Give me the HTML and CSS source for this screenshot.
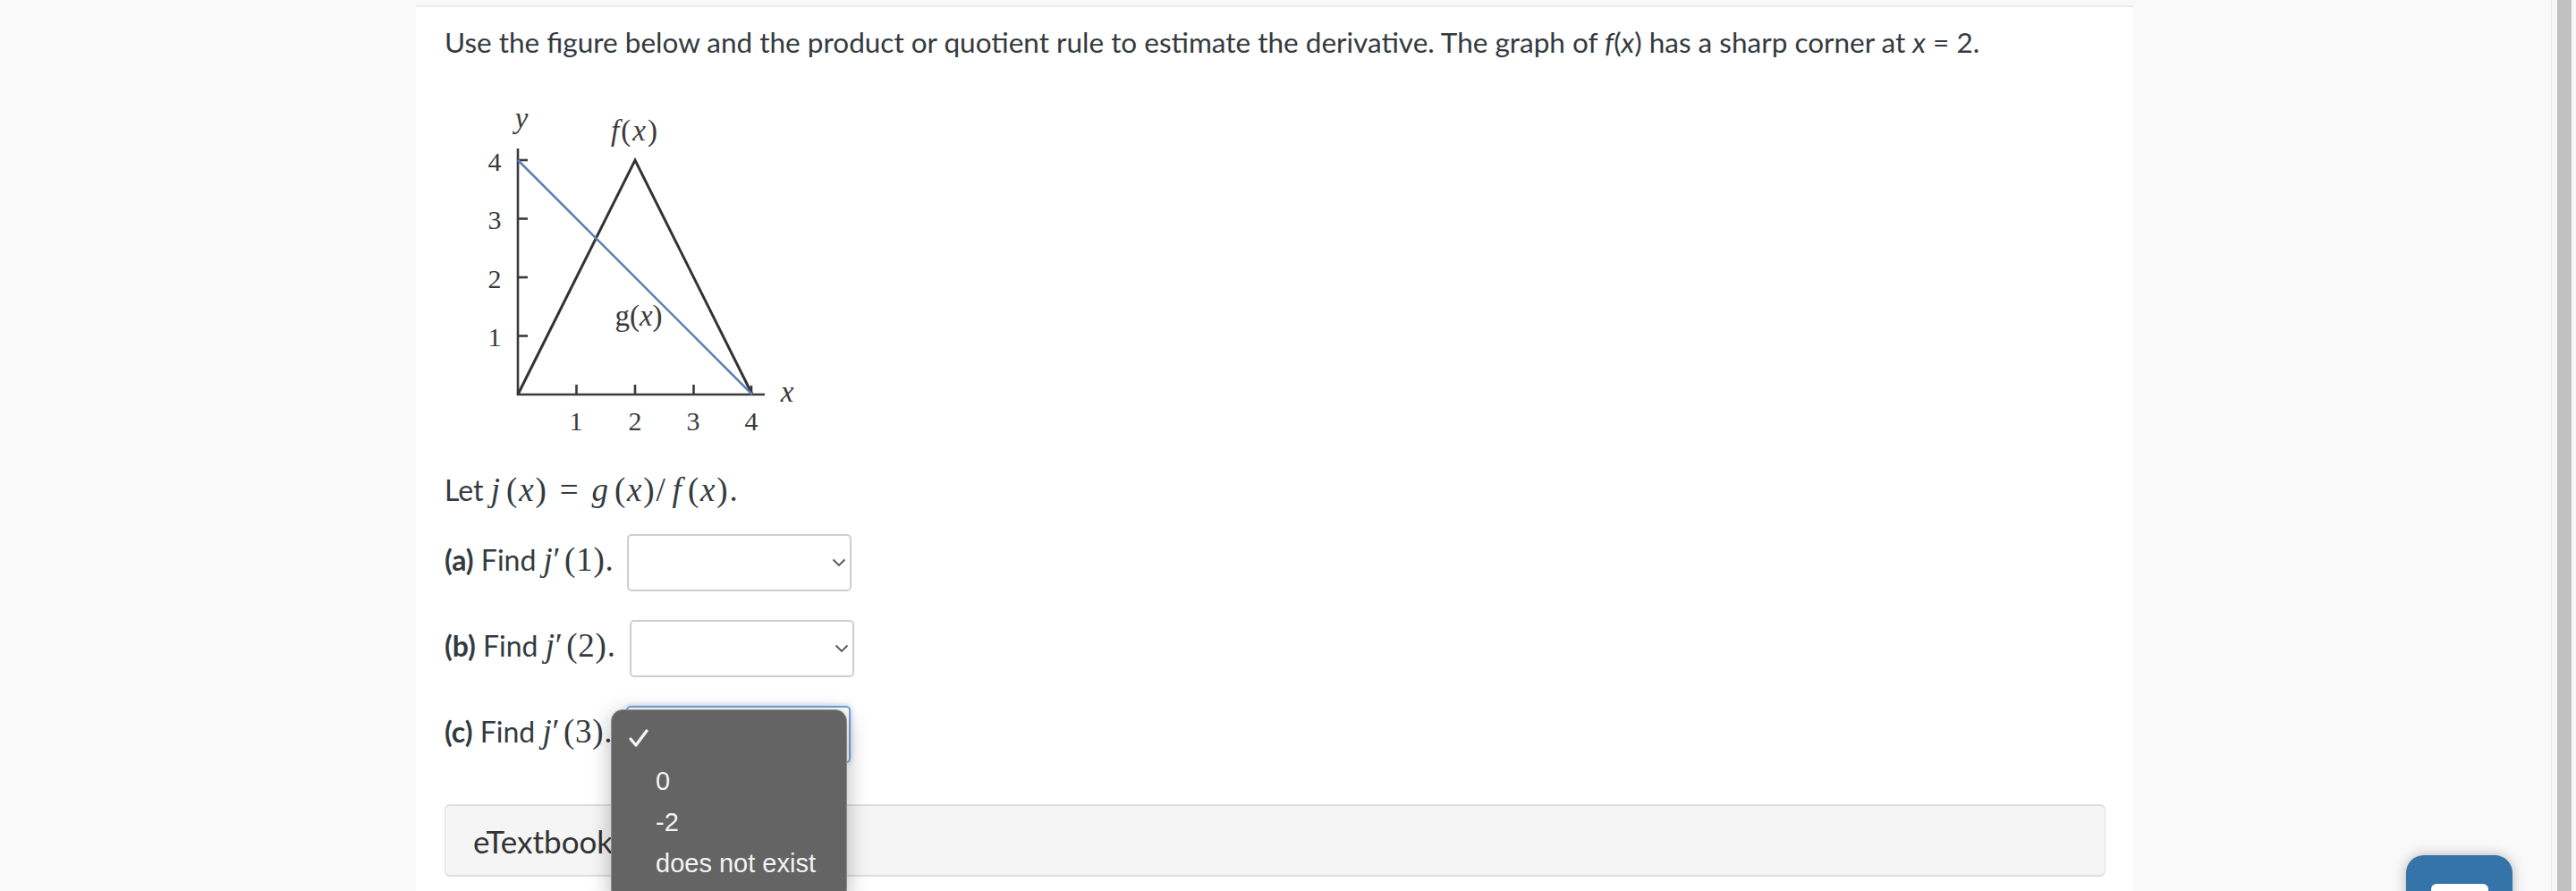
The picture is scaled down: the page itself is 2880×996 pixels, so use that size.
FILE: index.html
```html
<!DOCTYPE html>
<html>
<head>
<meta charset="utf-8">
<title>Question</title>
<link rel="stylesheet" href="styles.css">
</head>
<body>
<div class="main">
  <div class="card">
    <p class="prompt">Use the figure below and the product or quotient rule to estimate the derivative. The graph of <i>f</i>(<i>x</i>) has a sharp corner at <i>x</i> = 2.</p>

    <svg class="figure" width="420" height="390" viewBox="0 0 420 390" xmlns="http://www.w3.org/2000/svg">
      <g stroke="#3a3a3a" stroke-width="2.6" fill="none">
        <line x1="82" y1="66" x2="82" y2="342"/>
        <line x1="81" y1="341" x2="358" y2="341"/>
        <line x1="82" y1="275.5" x2="93" y2="275.5"/>
        <line x1="82" y1="210" x2="93" y2="210"/>
        <line x1="82" y1="144.5" x2="93" y2="144.5"/>
        <line x1="82" y1="79" x2="93" y2="79"/>
        <line x1="147.5" y1="341" x2="147.5" y2="330"/>
        <line x1="213" y1="341" x2="213" y2="330"/>
        <line x1="278.5" y1="341" x2="278.5" y2="330"/>
        <line x1="343" y1="341" x2="343" y2="331"/>
      </g>
      <polyline points="82,341 213,79 344,341" stroke="#333" stroke-width="3" fill="none" stroke-linejoin="miter"/>
      <line x1="82" y1="79" x2="344" y2="341" stroke="#5a84b3" stroke-width="2.6"/>
      <g class="svgnum" font-size="30" fill="#3a3a3a" text-anchor="middle">
        <text x="56" y="91">4</text>
        <text x="56" y="156">3</text>
        <text x="56" y="222">2</text>
        <text x="56" y="287">1</text>
        <text x="147" y="381">1</text>
        <text x="213" y="381">2</text>
        <text x="278" y="381">3</text>
        <text x="343" y="381">4</text>
      </g>
      <g class="svgnum" font-size="33" fill="#3a3a3a" text-anchor="middle">
        <text x="86" y="43" font-style="italic">y</text>
        <text x="213" y="57" letter-spacing="2"><tspan font-style="italic">f</tspan>(<tspan font-style="italic">x</tspan>)</text>
        <text x="217" y="264">g(<tspan font-style="italic">x</tspan>)</text>
        <text x="383" y="349" font-style="italic">x</text>
      </g>
    </svg>

    <p class="let">Let <span class="m"><i class="fn">j</i>(<i>x</i>)<span class="eq">=</span><i class="fn">g</i>(<i>x</i>)<span class="sl">/</span><i class="fn">f</i>(<i>x</i>).</span></p>

    <div class="row row-a">
      <span class="label"><b>(a)</b> Find <span class="m"><i>j</i><span class="pr">&#8242;</span>(1).</span></span>
      <div class="select"><svg class="chev" width="16" height="10" viewBox="0 0 16 10"><polyline points="1.5,1.5 8,8 14.5,1.5" fill="none" stroke="#555" stroke-width="1.8"/></svg></div>
    </div>
    <div class="row">
      <span class="label"><b>(b)</b> Find <span class="m"><i>j</i><span class="pr">&#8242;</span>(2).</span></span>
      <div class="select"><svg class="chev" width="16" height="10" viewBox="0 0 16 10"><polyline points="1.5,1.5 8,8 14.5,1.5" fill="none" stroke="#555" stroke-width="1.8"/></svg></div>
    </div>
    <div class="row">
      <span class="label"><b>(c)</b> Find <span class="m"><i>j</i><span class="pr">&#8242;</span>(3).</span></span>
      <div class="select focused"></div>
    </div>

    <div class="etext">eTextbook</div>
  </div>
</div>
<div class="scrollbar"><div class="thumb"></div></div>

<div class="menu">
  <div class="opt opt-check"><svg width="24" height="22" viewBox="0 0 24 22"><polyline points="3,12 9,19 21,3" fill="none" stroke="#f4f4f4" stroke-width="3.4" stroke-linecap="round" stroke-linejoin="round"/></svg></div>
  <div class="opt">0</div>
  <div class="opt">-2</div>
  <div class="opt">does not exist</div>
</div>

<div class="fab"><div class="fab-inner"></div></div>
</body>
</html>
```

FILE: styles.css
```css
html, body {
  margin: 0;
  padding: 0;
  height: 996px;
  overflow: hidden;
}
body {
  background: #f9f9f9;
  display: flex;
  font-family: Lato, "Liberation Sans", sans-serif;
  color: #333a40;
  position: relative;
}
.main {
  flex: 1;
  padding-top: 6px;
}
.card {
  margin-left: 465px;
  width: 1920px;
  box-sizing: border-box;
  height: 1100px;
  background: #fff;
  border-top: 2px solid #ebebeb;
  padding: 17px 31px 0 31px;
}
.prompt {
  margin: 0 0 0 1px;
  font-size: 31.5px;
  line-height: 45px;
}
.figure {
  display: block;
  margin-top: 30px;
  margin-left: 1px;
}
.svgnum {
  font-family: "Liberation Serif", serif;
}
.let {
  margin: 35px 0 0 1px;
  font-size: 32px;
  line-height: 45px;
  height: 45px;
}
.m {
  font-family: "Liberation Serif", serif;
  font-size: 37px;
  letter-spacing: 0.05em;
}
.m i {
  font-style: italic;
}
.fn {
  margin-right: 0.14em;
}
.eq {
  margin: 0 13px;
}
.sl {
  margin-right: 0.16em;
}
.label .m {
  letter-spacing: 0.02em;
}
.pr {
  margin-right: 0.1em;
}
.row {
  display: flex;
  align-items: flex-start;
  gap: 15px;
  margin-top: 32px;
  margin-left: 1px;
  height: 64px;
}
.row-a {
  margin-top: 27px;
}
.label {
  font-size: 32px;
  line-height: 58px;
  white-space: nowrap;
}
.label b {
  font-weight: 700;
}
.select {
  width: 251px;
  height: 64px;
  box-sizing: border-box;
  border: 2px solid #cfcfcf;
  border-radius: 5px;
  background: #fff;
  display: flex;
  align-items: center;
  justify-content: flex-end;
  padding-right: 4px;
}
.select.focused {
  border-color: #74a3d8;
  box-shadow: 0 0 6px rgba(90, 150, 220, 0.45);
}
.etext {
  margin-top: 46px;
  margin-left: 1px;
  height: 81px;
  box-sizing: border-box;
  border: 2px solid #dedede;
  border-left-width: 1px;
  border-right-width: 1px;
  border-radius: 6px;
  background: #f5f5f5;
  padding-left: 31px;
  font-size: 35px;
  line-height: 79px;
  color: #333;
}
.scrollbar {
  width: 28px;
  flex: none;
  background: #f7f7f7;
  border-left: 1px solid #e6e6e6;
  padding-left: 6px;
  box-sizing: border-box;
}
.thumb {
  width: 16px;
  height: 996px;
  background: #c1c1c1;
}
.menu {
  position: absolute;
  left: 683px;
  top: 793px;
  width: 264px;
  height: 214px;
  box-sizing: border-box;
  background: #646464;
  border: 1.5px solid #8c8c8c;
  border-radius: 13px;
  box-shadow: 0 6px 24px rgba(0, 0, 0, 0.28);
  padding-top: 6px;
  font-family: "Liberation Sans", Arial, sans-serif;
  font-size: 29px;
  color: #f3f3f3;
}
.opt {
  height: 46px;
  line-height: 46px;
  padding-left: 49px;
}
.opt-check {
  height: 50px;
  padding-left: 18px;
  display: flex;
  align-items: center;
}
.fab {
  position: absolute;
  left: 2690px;
  top: 956px;
  width: 119px;
  height: 90px;
  border-radius: 20px;
  background: #3474a8;
  box-shadow: 0 0 14px rgba(0, 0, 0, 0.28);
}
.fab-inner {
  margin: 32px 0 0 28px;
  width: 64px;
  height: 40px;
  border-radius: 6px;
  background: #fff;
}
```
